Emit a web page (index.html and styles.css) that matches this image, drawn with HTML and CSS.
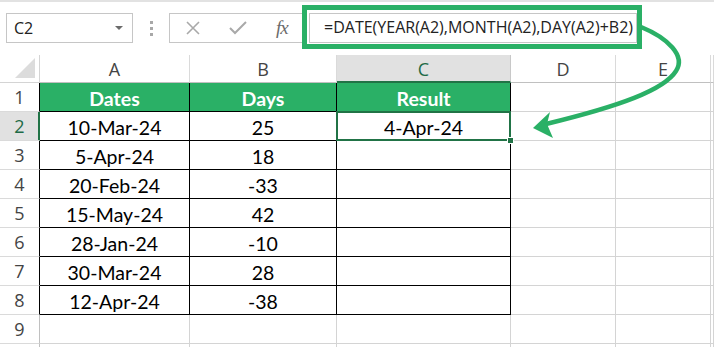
FILE: index.html
```html
<!DOCTYPE html>
<html lang="en">
<head>
    <meta charset="UTF-8">
    <meta name="viewport" content="width=device-width, initial-scale=1.0">
    <title>DATE formula - add days</title>
    <link rel="stylesheet" href="styles.css">
</head>
<body>
    <div class="toolbar">
        <div class="namebox">
            <span>C2</span>
            <span class="caret"></span>
        </div>
        <div class="grip"><i></i><i></i><i></i></div>
        <div class="fbuttons">
            <svg class="icon" width="16" height="16" viewBox="0 0 16 16">
                <path d="M2 2 L14 14 M14 2 L2 14" stroke="#a9a9a9" stroke-width="1.6" fill="none"/>
            </svg>
            <svg class="icon" width="18" height="16" viewBox="0 0 18 16">
                <path d="M1 8 L6 13 L17 2" stroke="#a9a9a9" stroke-width="2" fill="none"/>
            </svg>
            <span class="fx">fx</span>
        </div>
        <div class="fhighlight">
            <div class="fbar">=DATE(YEAR(A2),MONTH(A2),DAY(A2)+B2)</div>
        </div>
    </div>

    <div class="sheet">
        <!-- column headers -->
        <div class="corner"></div>
        <div class="colhead">A</div>
        <div class="colhead">B</div>
        <div class="colhead selected">C</div>
        <div class="colhead">D</div>
        <div class="colhead">E</div>
        <div class="colhead"></div>

        <!-- row 1 -->
        <div class="rowhead inside">1</div>
        <div class="cell t head">Dates</div>
        <div class="cell t head">Days</div>
        <div class="cell t head">Result</div>
        <div class="cell"></div>
        <div class="cell"></div>
        <div class="cell"></div>

        <!-- row 2 -->
        <div class="rowhead inside selected">2</div>
        <div class="cell t">10-Mar-24</div>
        <div class="cell t">25</div>
        <div class="cell t active">4-Apr-24</div>
        <div class="cell"></div>
        <div class="cell"></div>
        <div class="cell"></div>

        <!-- row 3 -->
        <div class="rowhead inside">3</div>
        <div class="cell t">5-Apr-24</div>
        <div class="cell t">18</div>
        <div class="cell t"></div>
        <div class="cell"></div>
        <div class="cell"></div>
        <div class="cell"></div>

        <!-- row 4 -->
        <div class="rowhead inside">4</div>
        <div class="cell t">20-Feb-24</div>
        <div class="cell t">-33</div>
        <div class="cell t"></div>
        <div class="cell"></div>
        <div class="cell"></div>
        <div class="cell"></div>

        <!-- row 5 -->
        <div class="rowhead inside">5</div>
        <div class="cell t">15-May-24</div>
        <div class="cell t">42</div>
        <div class="cell t"></div>
        <div class="cell"></div>
        <div class="cell"></div>
        <div class="cell"></div>

        <!-- row 6 -->
        <div class="rowhead inside">6</div>
        <div class="cell t">28-Jan-24</div>
        <div class="cell t">-10</div>
        <div class="cell t"></div>
        <div class="cell"></div>
        <div class="cell"></div>
        <div class="cell"></div>

        <!-- row 7 -->
        <div class="rowhead inside">7</div>
        <div class="cell t">30-Mar-24</div>
        <div class="cell t">28</div>
        <div class="cell t"></div>
        <div class="cell"></div>
        <div class="cell"></div>
        <div class="cell"></div>

        <!-- row 8 -->
        <div class="rowhead inside">8</div>
        <div class="cell t">12-Apr-24</div>
        <div class="cell t">-38</div>
        <div class="cell t"></div>
        <div class="cell"></div>
        <div class="cell"></div>
        <div class="cell"></div>

        <!-- row 9 -->
        <div class="rowhead">9</div>
        <div class="cell"></div>
        <div class="cell"></div>
        <div class="cell"></div>
        <div class="cell"></div>
        <div class="cell"></div>
        <div class="cell"></div>

        <!-- row 10 (only its top edge shows) -->
        <div class="rowhead"></div>
        <div class="cell"></div>
        <div class="cell"></div>
        <div class="cell"></div>
        <div class="cell"></div>
        <div class="cell"></div>
        <div class="cell"></div>
    </div>

    <!-- callout arrow from formula bar to result cell -->
    <svg class="callout" width="714" height="347" viewBox="0 0 714 347">
        <path d="M641 27 C668 38 686 56 676 71 C664 90 620 106 546 124" stroke="#2ab066" stroke-width="4.5" fill="none"/>
        <polygon points="533,128 550,112 547,124 553,138" fill="#2ab066"/>
    </svg>
</body>
</html>
```

FILE: styles.css
```css
body {
    margin: 0;
    padding: 0;
    background-color: #fff;
    font-family: "Open Sans", "Noto Sans", sans-serif;
    color: #222;
    position: relative;
    width: 714px;
    height: 347px;
    overflow: hidden;
}

.toolbar {
    display: flex;
    align-items: flex-start;
    height: 53px;
    padding-left: 6px;
    border-top: 2px solid #e2e2e2;
}

.namebox {
    display: flex;
    align-items: center;
    justify-content: space-between;
    box-sizing: border-box;
    width: 127px;
    height: 30px;
    margin-top: 11px;
    padding: 0 9px 0 7px;
    border: 1px solid #c6c6c6;
    font-size: 16px;
    color: #222;
}

.caret {
    width: 0;
    height: 0;
    border-left: 4px solid transparent;
    border-right: 4px solid transparent;
    border-top: 4px solid #6b6b6b;
}

.grip {
    display: flex;
    flex-direction: column;
    gap: 3px;
    margin: 19px 0 0 17px;
}

.grip i {
    display: block;
    width: 3px;
    height: 3px;
    background-color: #a8a8a8;
}

.fbuttons {
    display: flex;
    align-items: center;
    box-sizing: border-box;
    width: 133px;
    height: 30px;
    margin: 11px 0 0 16px;
    padding-left: 15px;
    border: 1px solid #c6c6c6;
    border-right: none;
}

.fbuttons .icon {
    margin-right: 28px;
}

.fbuttons .icon + .icon {
    margin-right: 29px;
}

.fx {
    font-family: "Liberation Serif", serif;
    font-style: italic;
    font-size: 19px;
    color: #6b6b6b;
    letter-spacing: -1px;
}

.fhighlight {
    box-sizing: border-box;
    width: 340px;
    height: 44px;
    margin-top: 3px;
    padding: 3px 0 1px 2px;
    border: 5px solid #2ab066;
}

.fbar {
    box-sizing: border-box;
    height: 30px;
    padding: 0 0 0 14px;
    border: 1px solid #c6c6c6;
    line-height: 27px;
    font-size: 16px;
    color: #222;
    white-space: nowrap;
    overflow: hidden;
}

.sheet {
    display: grid;
    grid-template-columns: 40px 150px 147px 174px 105px 95px 1fr;
    grid-template-rows: 28px repeat(10, 29px);
}

.corner,
.colhead,
.rowhead,
.cell {
    box-sizing: border-box;
    display: flex;
    align-items: center;
    justify-content: center;
    border-right: 1px solid #d4d4d4;
    border-bottom: 1px solid #d4d4d4;
}

.corner {
    position: relative;
}

.corner::after {
    content: "";
    position: absolute;
    right: 4px;
    bottom: 4px;
    width: 0;
    height: 0;
    border-left: 20px solid transparent;
    border-bottom: 20px solid #dcdcdc;
}

.colhead {
    font-size: 18px;
    color: #444;
    border-right-color: #dadada;
    border-bottom-color: #c0c0c0;
    padding-top: 1px;
}

.colhead.selected {
    background-color: #e1e1e1;
    color: #1e6b47;
    border-bottom: 2px solid #217346;
    border-right-color: #c8c8c8;
}

.rowhead {
    font-size: 18px;
    color: #444;
    border-right-color: #c0c0c0;
    border-bottom-color: #dadada;
}

.rowhead.inside {
    border-right-color: #000;
}

.rowhead.selected {
    background-color: #e1e1e1;
    color: #1e6b47;
    box-shadow: inset -1px 0 0 #217346;
    border-right-color: #217346;
}

.cell {
    font-family: Lato, "Open Sans", sans-serif;
    font-size: 19.5px;
    color: #000;
    padding-top: 3px;
}

.cell.t {
    border-right-color: #000;
    border-bottom-color: #000;
}

.cell.head {
    background-color: #2ab066;
    color: #fff;
    font-weight: bold;
}

.cell.active {
    position: relative;
}

.cell.active::before {
    content: "";
    position: absolute;
    top: -1px;
    left: -1px;
    right: -1px;
    bottom: -1px;
    border: 2px solid #217346;
    z-index: 1;
}

.cell.active::after {
    content: "";
    position: absolute;
    right: -4px;
    bottom: -4px;
    width: 5px;
    height: 5px;
    background-color: #217346;
    border: 1px solid #fff;
    z-index: 2;
}

.callout {
    position: absolute;
    top: 0;
    left: 0;
    pointer-events: none;
}
```
